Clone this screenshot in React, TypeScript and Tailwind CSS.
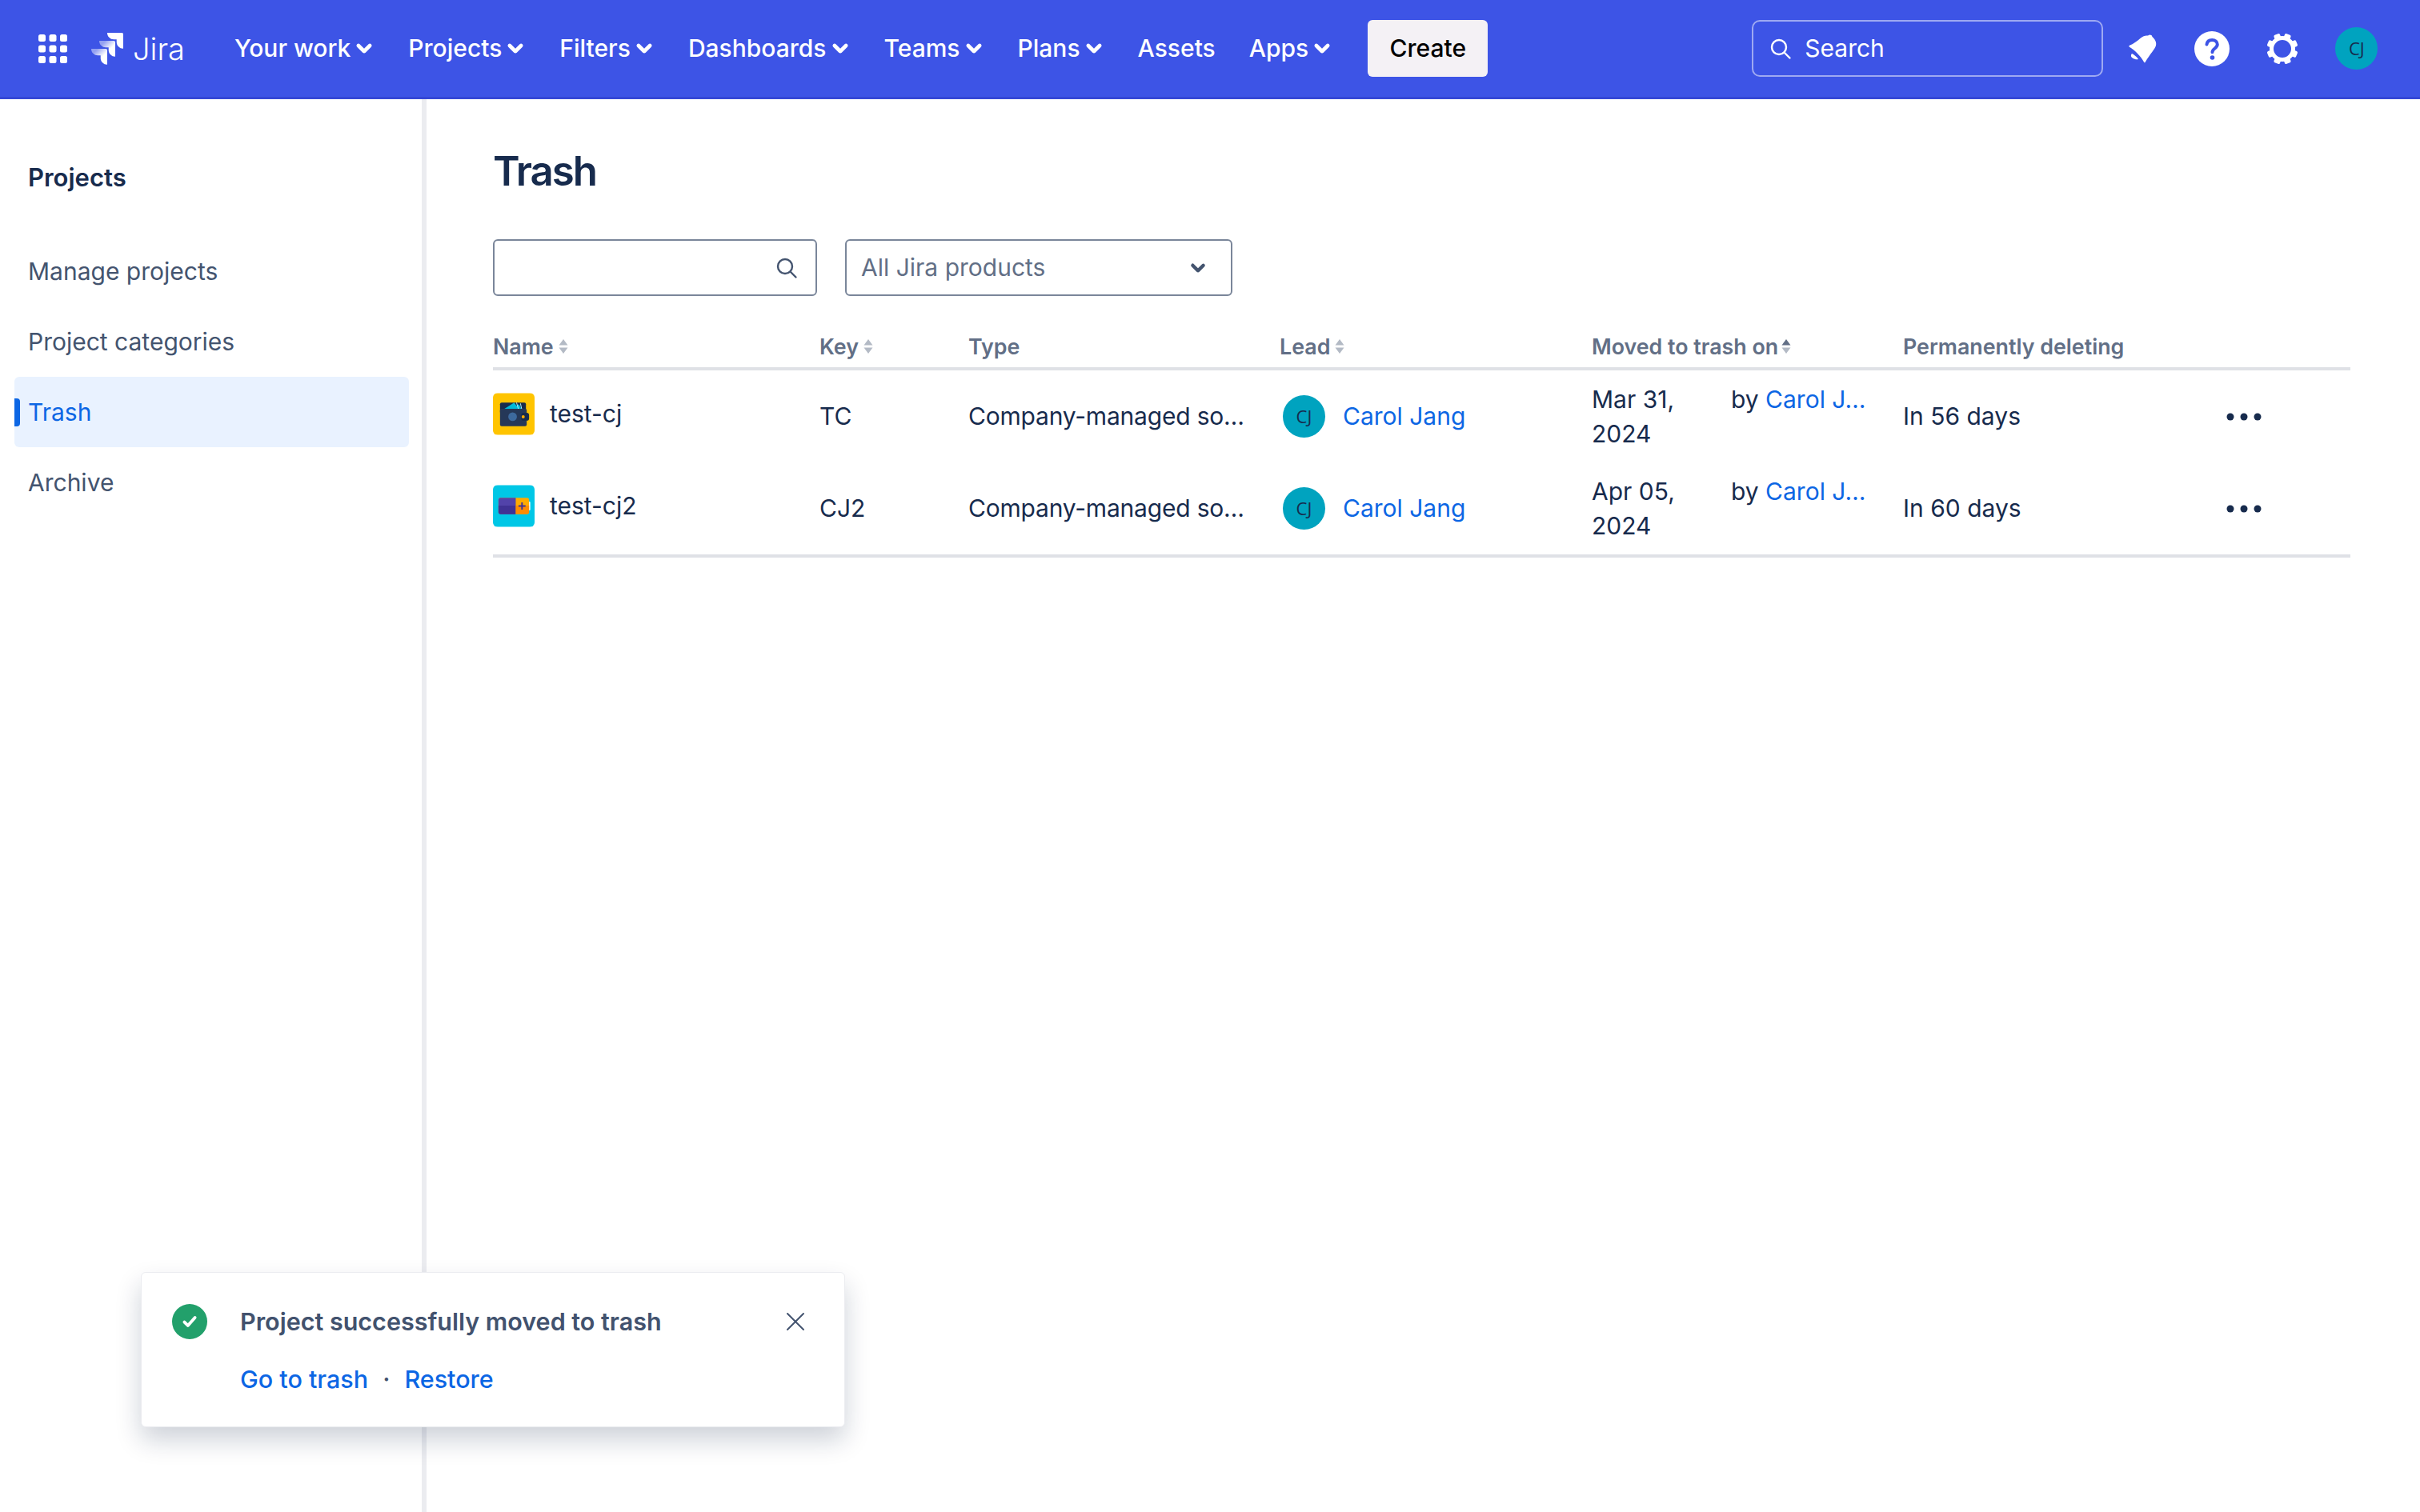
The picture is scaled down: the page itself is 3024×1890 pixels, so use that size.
const navItems = [
  { label: 'Your work', menu: true },
  { label: 'Projects', menu: true },
  { label: 'Filters', menu: true },
  { label: 'Dashboards', menu: true },
  { label: 'Teams', menu: true },
  { label: 'Plans', menu: true },
  { label: 'Assets', menu: false },
  { label: 'Apps', menu: true },
];

const sideItems = ['Manage projects', 'Project categories', 'Trash', 'Archive'];

const rows = [
  { name: 'test-cj', key: 'TC', date: 'Mar 31,', days: 'In 56 days', icon: 'wallet' },
  { name: 'test-cj2', key: 'CJ2', date: 'Apr 05,', days: 'In 60 days', icon: 'battery' },
];

function Chevron({ className }: { className?: string }) {
  return (
    <svg viewBox="7 8.500 10 8" className={className} fill="currentColor">
      <path d="M8.292 10.293a1.009 1.009 0 000 1.419l2.939 2.965c.218.215.5.322.779.322s.556-.107.769-.322l2.93-2.955a1.01 1.01 0 000-1.419.987.987 0 00-1.406 0l-2.298 2.317-2.307-2.327a.99.99 0 00-1.406 0z" />
    </svg>
  );
}

function SearchGlyph({ className }: { className?: string }) {
  return (
    <svg viewBox="0 0 28 28" className={className} fill="none" stroke="currentColor" strokeWidth="2.4" strokeLinecap="round">
      <circle cx="12" cy="12" r="9" />
      <path d="M19 19l6.5 6.5" />
    </svg>
  );
}

function SortArrows({ active }: { active?: boolean }) {
  return (
    <svg viewBox="0 0 12 18" className="h-[18px] w-[12px]">
      <path d="M6 0l5.500 7.500h-11z" fill={active ? '#626f86' : '#b3bac5'} />
      <path d="M6 18l5.500-7.500h-11z" fill="#b3bac5" />
    </svg>
  );
}

function AppGrid() {
  const cells = [0, 13.5, 27];
  return (
    <svg viewBox="0 0 36 36" className="h-[36px] w-[36px]" fill="#fff">
      {cells.map((y) => cells.map((x) => <rect key={`${x}-${y}`} x={x} y={y} width="9" height="9" rx="2.5" />))}
    </svg>
  );
}

function JiraMark() {
  const top = 'M27.25 0H14.4c0 3.2 2.6 5.8 5.8 5.8h2.4v2.3c0 3.2 2.6 5.8 5.8 5.8V1.2C28.4.5 27.9 0 27.25 0z';
  return (
    <svg viewBox="0.4 0 28 28" className="h-[40px] w-[40px]">
      <defs>
        <linearGradient id="jiraFade" x1="1" y1="1" x2="0.2" y2="0.2">
          <stop offset="0" stopColor="#fff" />
          <stop offset="0.5" stopColor="#fff" />
          <stop offset="1" stopColor="#fff" stopOpacity="0.45" />
        </linearGradient>
      </defs>
      <path d={top} fill="#fff" />
      <path d={top} transform="translate(-7 7)" fill="url(#jiraFade)" />
      <path d={top} transform="translate(-14 14)" fill="url(#jiraFade)" />
    </svg>
  );
}

function BellIcon() {
  return (
    <svg viewBox="0 0 36 36" className="h-[36px] w-[36px]" fill="#fff">
      <path d="M.5 14C6 12 11 8 15 4.500 18 2 21 1 24 1.500L26 .5l2.500.5 1 2C33 6 35 10 34 14c-1 4-7 10-13.500 21-.7.500-1.300 0-1.500-.5C15 27 8 20 .5 15.500z" />
      <path d="M4 24c3 1.500 6 4 8 7-3 1-8-1-9-3.500-.3-1.300.2-2.700 1-3.500z" />
    </svg>
  );
}

function HelpIcon() {
  return (
    <svg viewBox="0 0 44 44" className="h-[44px] w-[44px]">
      <circle cx="22" cy="22" r="22" fill="#fff" />
      <path d="M15.500 16.500c.5-3.500 3.200-5.500 6.700-5.500 3.800 0 6.600 2.300 6.600 5.600 0 4.800-6.300 5-6.300 9.700" fill="none" stroke="#3d54e6" strokeWidth="4" strokeLinecap="round" />
      <circle cx="22.500" cy="33" r="2.800" fill="#3d54e6" />
    </svg>
  );
}

function GearIcon() {
  const angles = [0, 45, 90, 135, 180, 225, 270, 315];
  return (
    <svg viewBox="0 0 40 40" className="h-[40px] w-[40px]" fill="#fff">
      {angles.map((a) => (
        <rect key={a} x="16" y="0.500" width="8" height="7" rx="1.800" transform={`rotate(${a + 22.5} 20 20)`} />
      ))}
      <circle cx="20" cy="20" r="13.500" fill="none" stroke="#fff" strokeWidth="5" />
    </svg>
  );
}

function WalletIcon() {
  return (
    <svg viewBox="0 0 53 53" className="h-[53px] w-[52px] shrink-0 rounded-[6px]">
      <rect width="53" height="53" fill="#ffc400" />
      <rect x="9" y="12" width="33" height="14" rx="2" fill="#172b4d" />
      <path d="M13 21l14-9 3 4 3-2 5 9z" fill="#00b8d9" />
      <path d="M30 12l3 10M35 13l2 9" stroke="#b3f5ff" strokeWidth="1" />
      <rect x="9" y="20" width="34" height="22" rx="2" fill="#253858" />
      <circle cx="25" cy="30" r="5.500" fill="#3d6a9e" />
      <rect x="36" y="25" width="10" height="10" rx="3" fill="#172b4d" />
      <circle cx="38.500" cy="30" r="2" fill="#ffab00" />
    </svg>
  );
}

function BatteryIcon() {
  return (
    <svg viewBox="0 0 53 53" className="h-[53px] w-[52px] shrink-0 rounded-[6px]">
      <rect width="53" height="53" fill="#00c7e6" />
      <rect x="45" y="21" width="2.500" height="11" rx="1" fill="#fff" />
      <rect x="7" y="16" width="39" height="21" rx="2.500" fill="#ffab00" />
      <path d="M9.500 16H29v21H9.500A2.500 2.500 0 017 34.500v-16A2.500 2.500 0 019.500 16z" fill="#5243aa" />
      <path d="M7 26h22v11H9.500A2.500 2.500 0 017 34.500z" fill="#403294" />
      <path d="M29 26h17v8.500a2.500 2.500 0 01-2.500 2.500H29z" fill="#ff8b00" />
      <path d="M37 22v9M32.500 26.500h9" stroke="#403294" strokeWidth="2" />
    </svg>
  );
}

function Avatar({ className }: { className: string }) {
  return (
    <span className={`flex h-[53px] w-[53px] shrink-0 items-center justify-center rounded-full bg-[#00a3bf] text-[22px] text-[#172b4d] [font-family:'Open_Sans',sans-serif] ${className}`}>
      CJ
    </span>
  );
}

function MoreDots() {
  return (
    <svg viewBox="0 0 44 10" className="h-[10px] w-[44px]" fill="#172b4d">
      <circle cx="5" cy="5" r="4.500" />
      <circle cx="22" cy="5" r="4.500" />
      <circle cx="39" cy="5" r="4.500" />
    </svg>
  );
}

export default function App() {
  return (
    <div className="relative flex h-[1890px] flex-col overflow-hidden bg-white text-[30px] text-[#172b4d] [font-family:Inter,sans-serif]">
      {/* Top bar */}
      <header className="flex h-[124px] shrink-0 items-center border-b-[3px] border-[#3547d6] bg-[#3d54e6] pl-[48px] text-white">
        <AppGrid />
        <div className="ml-[30px] flex items-center gap-[12px]">
          <JiraMark />
          <span className="text-[38px] leading-none font-light">Jira</span>
        </div>
        <nav className="ml-[62px] flex items-center gap-[42px] font-medium">
          {navItems.map((item) => (
            <div key={item.label} className="flex items-center">
              <span>{item.label}</span>
              {item.menu && <Chevron className="mr-[1px] ml-[5px] h-[19px] w-[24px]" />}
            </div>
          ))}
        </nav>
        <button className="ml-[44px] h-[71px] w-[150px] rounded-[6px] bg-[#f4f1f5] font-medium text-black">Create</button>
        <div className="ml-[330px] flex h-[71px] w-[439px] items-center gap-[16px] rounded-[10px] border-2 border-[#9ea9f2] px-[20px]">
          <SearchGlyph className="h-[28px] w-[28px]" />
          <span>Search</span>
        </div>
        <div className="ml-[32px] flex items-center">
          <BellIcon />
          <div className="ml-[46px]"><HelpIcon /></div>
          <div className="ml-[46px]"><GearIcon /></div>
          <Avatar className="ml-[46px]" />
        </div>
      </header>

      <div className="flex min-h-0 flex-1">
        {/* Sidebar */}
        <aside className="w-[533px] shrink-0 border-r-[6px] border-[#ebecf0] pt-[76px] pl-[18px] pr-[16px]">
          <h2 className="pl-[17px] text-[31px] leading-[44px] font-semibold">Projects</h2>
          <ul className="mt-[51px] flex flex-col text-[#44546f]">
            {sideItems.map((item) => {
              const active = item === 'Trash';
              return (
                <li
                  key={item}
                  className={`relative flex h-[88px] items-center rounded-[6px] pl-[17px] ${active ? 'bg-[#e9f2ff] text-[#0c66e4]' : ''}`}
                >
                  {active && <span className="absolute top-[27px] left-0 h-[35px] w-[7px] rounded-r-[4px] bg-[#0c66e4]" />}
                  {item}
                </li>
              );
            })}
          </ul>
        </aside>

        {/* Main */}
        <main className="min-w-0 flex-1 pt-[60px] pr-[87px] pl-[83px]">
          <h1 className="text-[51px] leading-[60px] font-semibold tracking-[-2px]">Trash</h1>

          <div className="mt-[55px] flex gap-[35px]">
            <div className="flex h-[71px] w-[405px] items-center justify-end rounded-[6px] border-2 border-[#7a869a] pr-[22px]">
              <SearchGlyph className="h-[28px] w-[28px] text-[#44546f]" />
            </div>
            <div className="flex h-[71px] w-[484px] items-center justify-between rounded-[6px] border-2 border-[#7a869a] pr-[30px] pl-[18px] text-[#626f86]">
              <span>All Jira products</span>
              <Chevron className="h-[18px] w-[22px] text-[#44546f]" />
            </div>
          </div>

          <div className="mt-[43px] grid h-[50px] grid-cols-[408px_186px_389px_390px_389px_1fr] items-center border-b-4 border-[#dfe1e6] pb-[8px] text-[26.8px] font-semibold text-[#626f86]">
            <div className="flex items-center gap-[6px]">Name<SortArrows /></div>
            <div className="flex items-center gap-[6px]">Key<SortArrows /></div>
            <div>Type</div>
            <div className="flex items-center gap-[6px]">Lead<SortArrows /></div>
            <div className="flex items-center gap-[4px]">Moved to trash on<SortArrows active /></div>
            <div>Permanently deleting</div>
          </div>

          <div className="border-b-4 border-[#dfe1e6]">
            {rows.map((row) => (
              <div key={row.key} className="grid h-[115px] grid-cols-[408px_186px_389px_390px_389px_1fr] items-center">
                <div className="-mt-[6px] flex items-center gap-[19px]">
                  {row.icon === 'wallet' ? <WalletIcon /> : <BatteryIcon />}
                  <span>{row.name}</span>
                </div>
                <div>{row.key}</div>
                <div className="truncate pr-[20px] tracking-[-0.2px]">Company-managed so…</div>
                <div className="flex items-center gap-[22px] pl-[4px]">
                  <Avatar className="" />
                  <a className="text-[#0c66e4]">Carol Jang</a>
                </div>
                <div className="flex leading-[43px]">
                  <div className="w-[174px]">
                    {row.date}
                    <br />
                    2024
                  </div>
                  <div>
                    by <a className="text-[#0c66e4]">Carol J…</a>
                  </div>
                </div>
                <div className="flex items-center">
                  <span className="w-[404px]">{row.days}</span>
                  <MoreDots />
                </div>
              </div>
            ))}
          </div>
        </main>
      </div>

      {/* Toast */}
      <div className="absolute bottom-[106px] left-[176px] flex h-[194px] w-[880px] rounded-[6px] border border-[#ebecf0] bg-white pt-[39px] pl-[38px] shadow-[0_16px_32px_rgba(9,30,66,0.2)]">
        <div className="flex h-[44px] w-[44px] shrink-0 items-center justify-center rounded-full bg-[#22a06b]">
          <svg viewBox="0 0 20 20" className="h-[22px] w-[22px]" fill="none" stroke="#fff" strokeWidth="3.5" strokeLinecap="round" strokeLinejoin="round">
            <path d="M4 10.500l4 4 8-9" />
          </svg>
        </div>
        <div className="ml-[41px] flex-1 text-[30.5px]">
          <div className="flex h-[44px] items-center justify-between pr-[49px] font-semibold text-[#42526e]">
            <span>Project successfully moved to trash</span>
            <svg viewBox="0 0 24 24" className="h-[24px] w-[24px]" fill="none" stroke="#42526e" strokeWidth="2" strokeLinecap="round">
              <path d="M2 2l20 20M22 2L2 22" />
            </svg>
          </div>
          <div className="mt-[27px] flex items-center font-medium text-[#0c66e4]">
            <a>Go to trash</a>
            <span className="mx-[18px] text-[#42526e]">·</span>
            <a>Restore</a>
          </div>
        </div>
      </div>
    </div>
  );
}
